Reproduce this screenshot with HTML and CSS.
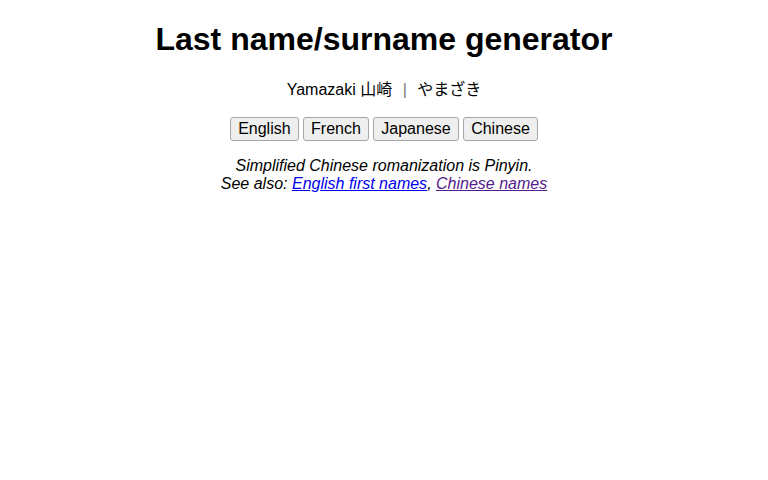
FILE: index.html
```html
<!DOCTYPE html>
<html lang="en">
<head>
<meta charset="utf-8">
<title>Last name/surname generator</title>
<link rel="stylesheet" href="styles.css">
</head>
<body>
<main class="page">
  <h1 class="title">Last name/surname generator</h1>
  <p class="result">Yamazaki 山崎 <span class="sep">|</span> やまざき</p>
  <div class="choices">
    <button class="choice" type="button">English</button>
    <button class="choice" type="button">French</button>
    <button class="choice" type="button">Japanese</button>
    <button class="choice" type="button">Chinese</button>
  </div>
  <p class="note">Simplified Chinese romanization is Pinyin.<br>See also: <a class="link" href="#english">English first names</a>, <a class="link visited" href="#chinese">Chinese names</a></p>
</main>
</body>
</html>
```
FILE: styles.css
```css
body {
  margin: 0;
  font-family: "Liberation Sans", Arial, "Noto Sans CJK JP", sans-serif;
  font-size: 16px;
  color: #000;
  background: #fff;
}

.page {
  text-align: center;
  padding: 0 8px;
}

.title {
  font-size: 32px;
  font-weight: bold;
  margin: 21px 0 0;
  padding-bottom: 1px;
}

.result {
  margin: 22px 0 0;
  line-height: 18px;
}

.sep {
  color: #777;
  padding: 0 6px;
}

.choices {
  margin: 17px 0 0;
  line-height: 24px;
}

.choice {
  font-family: "Liberation Sans", Arial, sans-serif;
  font-size: 16px;
  line-height: 18px;
  color: #000;
  background: #efefef;
  border: 1px solid #a5a5a5;
  border-radius: 3px;
  padding: 2px 7px;
  vertical-align: middle;
}

.note {
  font-style: italic;
  margin: 16px 0 0;
  line-height: 18px;
}

.link {
  color: #0000ee;
}

.link.visited {
  color: #551a8b;
}
```
